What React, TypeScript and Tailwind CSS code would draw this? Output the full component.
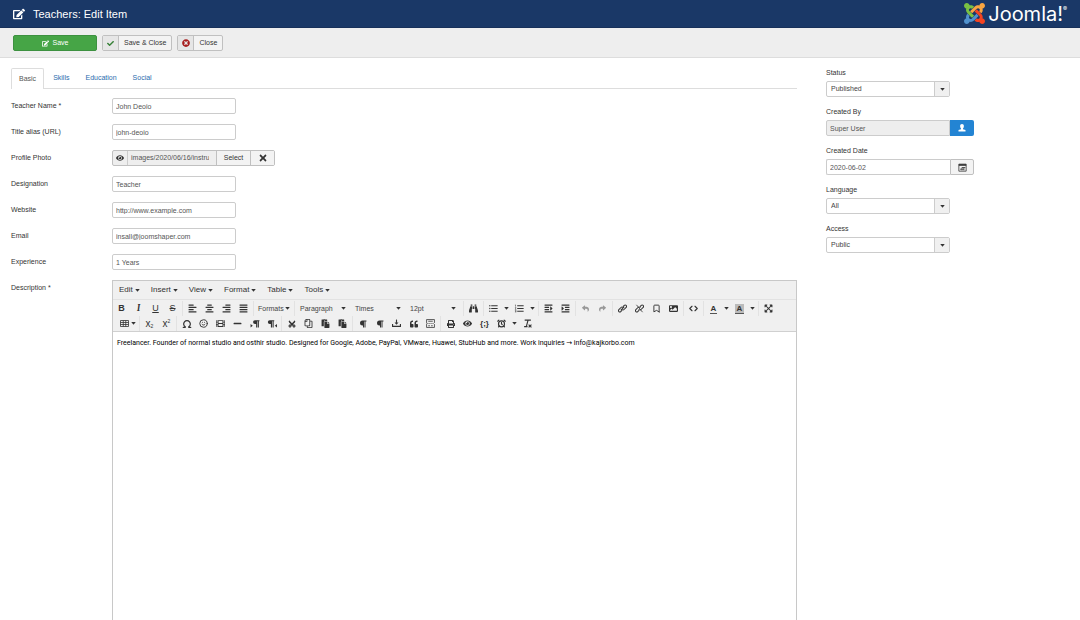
import type { ReactNode } from 'react'
import { AlarmClock, Bookmark, Code, Omega, Smile } from 'lucide-react'
import {
  FaAlignCenter, FaAlignJustify, FaAlignLeft, FaAlignRight, FaBinoculars, FaCheck, FaCut, FaEdit,
  FaExpandArrowsAlt, FaEye, FaFilm, FaImage, FaIndent, FaMinus, FaOutdent, FaParagraph, FaPaste,
  FaPrint, FaQuoteLeft, FaRegCopy, FaReply, FaShare, FaTimes, FaTimesCircle,
} from 'react-icons/fa'
import { MdFormatListBulleted, MdFormatListNumbered } from 'react-icons/md'

const tabs = ['Basic', 'Skills', 'Education', 'Social']
const menus = ['Edit', 'Insert', 'View', 'Format', 'Table', 'Tools']

type Tool = { name: string; icon: ReactNode; split?: boolean; faded?: boolean }

const glyph = 'text-[9px] leading-none'

const rowOneStart: Tool[][] = [
  [
    { name: 'Bold', icon: <b className={glyph}>B</b> },
    { name: 'Italic', icon: <i className="font-serif text-[9px] leading-none font-bold">I</i> },
    { name: 'Underline', icon: <u className={glyph}>U</u> },
    { name: 'Strikethrough', icon: <s className={glyph}>S</s> },
  ],
  [
    { name: 'Align left', icon: <FaAlignLeft size={9} /> },
    { name: 'Align center', icon: <FaAlignCenter size={9} /> },
    { name: 'Align right', icon: <FaAlignRight size={9} /> },
    { name: 'Justify', icon: <FaAlignJustify size={9} /> },
  ],
]

const rowOneEnd: Tool[][] = [
  [{ name: 'Find and replace', icon: <FaBinoculars size={9} /> }],
  [
    { name: 'Bullet list', icon: <MdFormatListBulleted size={11} />, split: true },
    { name: 'Numbered list', icon: <MdFormatListNumbered size={11} />, split: true },
  ],
  [
    { name: 'Decrease indent', icon: <FaOutdent size={9} className="-scale-x-100" /> },
    { name: 'Increase indent', icon: <FaIndent size={9} /> },
  ],
  [
    { name: 'Undo', icon: <FaReply size={7} />, faded: true },
    { name: 'Redo', icon: <FaShare size={7} />, faded: true },
  ],
  [
    { name: 'Insert link', icon: <ChainIcon /> },
    { name: 'Remove link', icon: <ChainIcon broken /> },
    { name: 'Anchor', icon: <Bookmark size={9} strokeWidth={2.5} /> },
    { name: 'Insert image', icon: <FaImage size={9} /> },
  ],
  [{ name: 'Source code', icon: <Code size={9} strokeWidth={3} /> }],
  [
    { name: 'Text color', icon: <b className="border-b border-[#555] px-px text-[8px] leading-[9px]">A</b>, split: true },
    { name: 'Background color', icon: <b className="border-b border-[#555] bg-[#bbb] px-0.5 text-[8px] leading-[9px]">A</b>, split: true },
  ],
  [{ name: 'Fullscreen', icon: <FaExpandArrowsAlt size={9} /> }],
]

const rowTwo: Tool[][] = [
  [
    { name: 'Subscript', icon: <SubSup side="self-end">2</SubSup> },
    { name: 'Superscript', icon: <SubSup side="self-start">2</SubSup> },
  ],
  [
    { name: 'Special character', icon: <Omega size={10} strokeWidth={3} /> },
    { name: 'Emoticons', icon: <Smile size={9} strokeWidth={2.5} /> },
    { name: 'Insert media', icon: <FaFilm size={9} /> },
    { name: 'Horizontal line', icon: <FaMinus size={9} /> },
    { name: 'Left to right', icon: <DirectionIcon /> },
    { name: 'Right to left', icon: <DirectionIcon rtl /> },
  ],
  [
    { name: 'Cut', icon: <FaCut size={8} className="-rotate-90" /> },
    { name: 'Copy', icon: <FaRegCopy size={9} className="-scale-x-100" /> },
    { name: 'Paste', icon: <FaPaste size={9} /> },
    { name: 'Paste as text', icon: <FaPaste size={9} /> },
  ],
  [
    { name: 'Show blocks', icon: <FaParagraph size={8} /> },
    { name: 'Show invisible characters', icon: <FaParagraph size={8} /> },
    { name: 'Nonbreaking space', icon: <TrayIcon /> },
    { name: 'Blockquote', icon: <FaQuoteLeft size={8} /> },
    { name: 'Insert template', icon: <TemplateIcon /> },
  ],
  [
    { name: 'Print', icon: <FaPrint size={8} /> },
    { name: 'Preview', icon: <FaEye size={9} /> },
    { name: 'Code sample', icon: <b className="text-[8px] leading-none">{'{;}'}</b> },
    { name: 'Insert date', icon: <AlarmClock size={9} strokeWidth={3} />, split: true },
    { name: 'Clear formatting', icon: <ClearIcon /> },
  ],
]

function Caret() {
  return (
    <svg viewBox="0 0 10 6" className="h-[3px] w-[5px] shrink-0 fill-[#333]" aria-hidden="true">
      <path d="M.5 0h9L5 5.500z" />
    </svg>
  )
}

function ChainIcon({ broken = false }: { broken?: boolean }) {
  return (
    <svg viewBox="0 0 16 16" className="size-[9px]" fill="none" stroke="currentColor" strokeWidth="1.8" strokeLinecap="round">
      <path d="M6.5 11.8 4.9 13.4a2.4 2.4 0 0 1-3.4-3.4l3.800-3.800a2.600 2.600 0 0 1 3.700 0" />
      <path d="m9.5 4.2 1.600-1.600a2.400 2.400 0 0 1 3.400 3.400l-3.800 3.800a2.600 2.600 0 0 1-3.700 0" />
      {broken ? <path d="m3 2 10 12" strokeWidth="1.4" /> : <path d="m5.500 10.500 5-5" />}
    </svg>
  )
}

function DirectionIcon({ rtl = false }: { rtl?: boolean }) {
  return (
    <svg viewBox="0 0 18 16" className="h-[9px] w-2.5" fill="currentColor">
      {rtl ? (
        <path d="M5 2h8v2h-1v11h-2V4H9v11H7V9H5a3.500 3.500 0 0 1 0-7zM18 9v6l-4-3z" />
      ) : (
        <path d="M9 2h8v2h-1v11h-2V4h-1v11h-2V9H9a3.500 3.500 0 0 1 0-7zM1 9v6l4-3z" />
      )}
    </svg>
  )
}

function TrayIcon() {
  return (
    <svg viewBox="0 0 16 16" className="size-[9px]" fill="none" stroke="currentColor" strokeWidth="2">
      <path d="M8 1v6" />
      <path d="M4.500 6h7L8 10z" fill="currentColor" stroke="none" />
      <path d="M1 9v4h14V9" />
    </svg>
  )
}

function TemplateIcon() {
  return (
    <svg viewBox="0 0 16 16" className="size-[9px]" fill="none" stroke="currentColor" strokeWidth="1.4">
      <path d="M1 7V1h14v6M1 9v6h14V9M4 4h8M4 12h3M9 12h3" />
      <path d="M1 8h14" strokeDasharray="2 1.5" />
    </svg>
  )
}

function ClearIcon() {
  return (
    <svg viewBox="0 0 16 16" className="size-[9px]" fill="none" stroke="currentColor" strokeWidth="2">
      <path d="M3 2h11M9 2 6 13M2 13.500h6M10 10l5 5M15 10l-5 5" />
    </svg>
  )
}

function CalendarIcon() {
  return (
    <svg viewBox="0 0 16 16" className="size-[9px]" fill="none" stroke="#333" strokeWidth="1.4" aria-hidden="true">
      <path d="M1.500 2h13v12.500h-13z" />
      <path d="M1.500 3.500h13" strokeWidth="3" />
      <path d="M7 8h6M3.500 11h7M7 8v5M10.500 8v5" />
    </svg>
  )
}

function UserIcon() {
  return (
    <svg viewBox="0 0 16 16" className="size-2 fill-white" aria-hidden="true">
      <path d="M8 0c2.300 0 3.800 1.700 3.800 4.200 0 2-.7 3.800-1.800 4.800v1.500l5 1.700V15H1v-2.800l5-1.700V9C4.900 8 4.200 6.200 4.200 4.200 4.200 1.700 5.700 0 8 0z" />
    </svg>
  )
}

function SubSup({ side, children }: { side: string; children: ReactNode }) {
  return (
    <span className="flex h-2.5 items-center text-[10px] leading-none">
      x<span className={`text-[5px] leading-none ${side}`}>{children}</span>
    </span>
  )
}

function JoomlaLogo() {
  return (
    <div className="flex items-center gap-[3px] text-white">
      <svg viewBox="0 32 448 448" className="size-[21px]" aria-hidden="true">
        <path fill="#7ac143" d="M.6 92.100C.6 58.800 27.400 32 60.400 32c30 0 54.500 21.900 59.200 50.200 32.600-7.600 67.100.6 96.500 30l-44.300 44.300c-20.500-20.500-42.600-16.300-55.400-3.500-14.300 14.300-14.300 37.900 0 52.200l99.500 99.500-44 44.300c-87.700-87.200-49.700-49.700-99.800-99.700-26.800-26.500-35-64.800-24.800-98.900C20.400 144.600.6 120.700.6 92.100z" />
        <path fill="#f9a541" d="M130.100 208.500l44.300 44.300c10-10 89.700-89.700 99.700-99.800 14.300-14.300 37.600-14.300 51.900 0 12.800 12.800 17 35-3.500 55.400l44 44.300c31.200-31.200 38.500-67.600 28.900-101.200 29.200-4.100 51.900-29.200 51.900-59.500 0-33.200-26.800-60.100-59.800-60.100-30.300 0-55.400 22.500-59.500 51.600-33.800-9.900-71.700-1.500-98.300 25.100-18.300 19.100-71.100 71.500-99.600 99.900z" />
        <path fill="#f44321" d="M396.400 360.700c8.200-32.700-.9-68.500-26.300-93.900-11.800-12.200 5 4.700-99.500-99.700l-44.300 44.300 99.700 99.700c14.300 14.300 14.300 37.600 0 51.900-12.800 12.800-35 17-55.400-3.500l-44 44.300c27.600 30.200 68 38.800 102.700 28 5.500 27.400 29.700 48.100 58.900 48.100 33 0 59.800-26.800 59.800-60.100 0-30.200-22.500-55-51.600-59.100z" />
        <path fill="#5091cd" d="M312.100 307.600l-44-44.300c-87 86.400-50.400 50.400-99.700 99.800-14.300 14.300-37.600 14.300-51.900 0-13.100-13.400-16.900-35.300 3.200-55.400l-44-44.300c-30.200 30.200-38 65.200-29.500 98.300-26.700 6-46.200 29.900-46.200 58.200C0 453.200 26.800 480 59.800 480c28.600 0 52.500-19.800 58.600-46.700 32.700 8.200 68.500-.6 94.200-26 32.100-32 12.200-12.400 99.500-99.700z" />
      </svg>
      <span className="flex font-['Inter',sans-serif] text-[20px] leading-5">
        Joomla!<span className="text-[6px] leading-[10px]">®</span>
      </span>
    </div>
  )
}

function ToolGroup({ tools, first = false }: { tools: Tool[]; first?: boolean }) {
  return (
    <div className={first ? 'flex pr-px' : 'flex border-l border-[#e2e2e2] px-px'}>
      {tools.map((tool) => (
        <button
          key={tool.name}
          type="button"
          aria-label={tool.name}
          className={`flex h-[15px] items-center ${tool.split ? 'w-[26px]' : 'w-[17px]'} ${tool.faded ? 'text-[#999]' : 'text-[#333]'}`}
        >
          <span className="flex w-[17px] shrink-0 items-center justify-center">{tool.icon}</span>
          {tool.split && <span className="flex w-[9px] justify-center"><Caret /></span>}
        </button>
      ))}
    </div>
  )
}

function ListBox({ label, className }: { label: string; className: string }) {
  return (
    <button type="button" className={`flex h-[15px] items-center justify-between pl-[3px] text-[7px] text-[#444] ${className}`}>
      {label}
      <Caret />
    </button>
  )
}

const inputClass = 'h-4 w-[124px] rounded-xs border border-[#ccc] bg-white px-[3px] text-[7px] text-[#555] outline-none'

function Field({ id, label, value }: { id: string; label: string; value: string }) {
  return (
    <div className="flex items-center">
      <label htmlFor={id} className="w-[101px] shrink-0">{label}</label>
      <input id={id} defaultValue={value} className={inputClass} />
    </div>
  )
}

function SideSelect({ id, label, value }: { id: string; label: string; value: string }) {
  return (
    <div>
      <label htmlFor={id} className="block leading-4">{label}</label>
      <div className="relative w-[124px]">
        <select id={id} className="block h-4 w-full appearance-none rounded-xs border border-[#ccc] bg-white px-1 text-[7px] text-[#444] outline-none">
          <option>{value}</option>
        </select>
        <span className="pointer-events-none absolute inset-y-px right-px flex w-[15px] items-center justify-center border-l border-[#ccc] bg-[#f0f0f0]">
          <Caret />
        </span>
      </div>
    </div>
  )
}

function Editor() {
  return (
    <div className="flex min-w-0 flex-1 flex-col border border-b-0 border-[#c8c8c8] bg-white">
      <div className="border-b border-[#d0d0d0] bg-[#f0f0f0]">
        <div className="flex h-[19px] items-center gap-[11px] border-b border-[#e2e2e2] px-1.5 text-[8px] text-[#333]">
          {menus.map((menu) => (
            <button key={menu} type="button" className="flex items-center gap-0.5">
              {menu}
              <Caret />
            </button>
          ))}
        </div>
        <div className="flex pt-px">
          {rowOneStart.map((tools, i) => <ToolGroup key={tools[0].name} tools={tools} first={i === 0} />)}
          <div className="border-l border-[#e2e2e2] pr-1 pl-px">
            <ListBox label="Formats" className="w-[35px]" />
          </div>
          <div className="flex gap-1.5 border-l border-[#e2e2e2] pr-[7px] pl-0.5">
            <ListBox label="Paragraph" className="w-[49px]" />
            <ListBox label="Times" className="w-[49px]" />
            <ListBox label="12pt" className="w-[49px]" />
          </div>
          {rowOneEnd.map((tools) => <ToolGroup key={tools[0].name} tools={tools} />)}
        </div>
        <div className="flex">
          <button type="button" aria-label="Table" className="flex h-[15px] w-[26px] items-center justify-center gap-0.5 pl-1 text-[#333]">
            <svg viewBox="0 0 18 14" className="h-[7px] w-[9px]" fill="none" stroke="currentColor" strokeWidth="1.6">
              <path d="M1 1h16v12H1zM1 5h16M1 9h16M6.500 1v12M11.500 1v12" />
            </svg>
            <Caret />
          </button>
          {rowTwo.map((tools) => <ToolGroup key={tools[0].name} tools={tools} />)}
        </div>
      </div>
      <div
        role="textbox"
        aria-label="Description"
        className="flex-1 px-1 py-1.5 font-['Roboto','DejaVu_Sans',sans-serif] text-[7px] leading-[10px] text-black"
      >
        Freelancer. Founder of normal studio and osthir studio. Designed for Google, Adobe, PayPal, VMware, Huawei, StubHub and more. Work inquiries → info@kajkorbo.com
      </div>
    </div>
  )
}

export default function App() {
  return (
    <div className="flex min-h-screen flex-col bg-white font-['Liberation_Sans',Arial,sans-serif] text-[7px] leading-[10px] text-[#333]">
      <header className="flex h-7 items-center justify-between border-b border-[#17305a] bg-[#1a3867] pr-[13px] pl-[13px]">
        <h1 className="flex items-center gap-2 text-[11px] text-white">
          <FaEdit size={12} />
          Teachers: Edit Item
        </h1>
        <JoomlaLogo />
      </header>

      {/* Actions */}
      <div className="flex gap-[5px] border-b border-[#ddd] bg-[#eee] px-[13px] pt-[7px] pb-1.5">
        <button type="button" className="flex h-4 w-[84px] items-center justify-center gap-1 rounded-xs border border-[#3d9140] bg-[#46a546] text-white">
          <FaEdit size={7} />
          Save
        </button>
        <button type="button" className="flex h-4 items-stretch rounded-xs border border-[#c0c0c0] bg-[#f3f3f3]">
          <span className="flex w-4 items-center justify-center border-r border-[#c0c0c0] bg-[#e6e6e6] text-[#378137]"><FaCheck size={7} /></span>
          <span className="flex items-center px-[5px]">Save &amp; Close</span>
        </button>
        <button type="button" className="flex h-4 items-stretch rounded-xs border border-[#c0c0c0] bg-[#f3f3f3]">
          <span className="flex w-4 items-center justify-center border-r border-[#c0c0c0] bg-[#e6e6e6] text-[#a71d1d]"><FaTimesCircle size={8} /></span>
          <span className="flex items-center px-[5px]">Close</span>
        </button>
      </div>

      <main className="flex flex-1 gap-[29px] px-[11px] pt-2.5">
        <form className="flex min-w-0 flex-1 flex-col">
          <nav className="mb-[9px] flex h-[21px] border-b border-[#ddd]">
            {tabs.map((tab, i) => (
              <a
                key={tab}
                href={`#${tab.toLowerCase()}`}
                className={i === 0
                  ? '-mb-px mr-px flex items-center rounded-t-xs border border-b-0 border-[#ddd] bg-white px-[7px] text-[#555]'
                  : 'flex items-center px-2 text-[#2a6cae]'}
              >
                {tab}
              </a>
            ))}
          </nav>

          <div className="flex flex-1 flex-col gap-2.5">
            <Field id="name" label="Teacher Name *" value="John Deoio" />
            <Field id="alias" label="Title alias (URL)" value="john-deoio" />
            <div className="flex items-center">
              <label htmlFor="photo" className="w-[101px] shrink-0">Profile Photo</label>
              <div className="flex h-4 rounded-xs border border-[#c0c0c0] bg-[#eee]">
                <span className="flex w-[15px] items-center justify-center border-r border-[#ccc]"><FaEye size={8} /></span>
                <input id="photo" readOnly defaultValue="images/2020/06/16/instructor-1.jpg" className="w-[89px] border-r border-[#c0c0c0] pr-[7px] pl-[3px] text-[7px] text-[#555] outline-none" />
                <button type="button" className="w-[34px] border-r border-[#c0c0c0] bg-[#f3f3f3]">Select</button>
                <button type="button" aria-label="Clear" className="flex w-[23px] items-center justify-center bg-[#f3f3f3]"><FaTimes size={10} /></button>
              </div>
            </div>
            <Field id="designation" label="Designation" value="Teacher" />
            <Field id="website" label="Website" value="http://www.example.com" />
            <Field id="email" label="Email" value="insall@joomshaper.com" />
            <Field id="experience" label="Experience" value="1 Years" />
            <div className="flex flex-1">
              <span className="w-[101px] shrink-0 pt-[3px]">Description *</span>
              <Editor />
            </div>
          </div>
        </form>

        <aside className="-mt-[3px] flex w-[243px] flex-col gap-[7px]">
          <SideSelect id="status" label="Status" value="Published" />
          <div>
            <label htmlFor="author" className="block leading-4">Created By</label>
            <div className="flex">
              <input id="author" readOnly defaultValue="Super User" className="h-4 w-[124px] rounded-l-xs border border-[#ccc] bg-[#eee] px-[3px] text-[7px] text-[#555] outline-none" />
              <button type="button" aria-label="Select user" className="flex h-4 w-6 items-center justify-center rounded-r-xs bg-[#2384d3]"><UserIcon /></button>
            </div>
          </div>
          <div>
            <label htmlFor="created" className="block leading-4">Created Date</label>
            <div className="flex">
              <input id="created" defaultValue="2020-06-02" className="h-4 w-[124px] rounded-l-xs border border-r-0 border-[#ccc] bg-white px-[3px] text-[7px] text-[#555] outline-none" />
              <button type="button" aria-label="Open the calendar" className="flex h-4 w-6 items-center justify-center rounded-r-xs border border-[#c0c0c0] bg-[#f3f3f3]"><CalendarIcon /></button>
            </div>
          </div>
          <SideSelect id="language" label="Language" value="All" />
          <SideSelect id="access" label="Access" value="Public" />
        </aside>
      </main>
    </div>
  )
}
